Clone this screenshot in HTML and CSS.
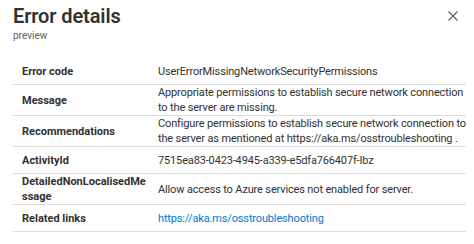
FILE: index.html
```html
<!DOCTYPE html>
<html>
<head>
<meta charset="utf-8">
<link rel="stylesheet" href="styles.css">
</head>
<body>
<div class="panel">
  <div class="header">
    <div class="titles">
      <h1 class="title">Error details</h1>
      <div class="subtitle">preview</div>
    </div>
    <button class="close" aria-label="Close">
      <svg width="10" height="10" viewBox="0 0 10 10"><path d="M0.5 0.5L9.5 9.5M9.5 0.5L0.5 9.5" stroke="#605e5c" stroke-width="1.1" fill="none"/></svg>
    </button>
  </div>
  <div class="table">
    <div class="row"><div class="label">Error code</div><div class="value">UserErrorMissingNetworkSecurityPermissions</div></div>
    <div class="row"><div class="label">Message</div><div class="value">Appropriate permissions to establish secure network connection<br>to the server are missing.</div></div>
    <div class="row"><div class="label">Recommendations</div><div class="value">Configure permissions to establish secure network connection to<br>the server as mentioned at https://aka.ms/osstroubleshooting .</div></div>
    <div class="row"><div class="label">ActivityId</div><div class="value">7515ea83-0423-4945-a339-e5dfa766407f-Ibz</div></div>
    <div class="row"><div class="label">DetailedNonLocalisedMe<br>ssage</div><div class="value">Allow access to Azure services not enabled for server.</div></div>
    <div class="row"><div class="label">Related links</div><div class="value"><a class="link" href="#">https://aka.ms/osstroubleshooting</a></div></div>
  </div>
</div>
</body>
</html>
```
FILE: styles.css
```css
html, body {
  margin: 0;
  padding: 0;
  background: #ffffff;
}
body {
  font-family: Roboto, "Liberation Sans", sans-serif;
  color: #323130;
  width: 474px;
  height: 244px;
  overflow: hidden;
}
.panel {
  padding: 4px 16px 0 13px;
}
.header {
  display: flex;
  justify-content: space-between;
  align-items: flex-start;
}
.title {
  margin: 0;
  font-size: 20px;
  font-weight: 600;
  line-height: 25px;
  letter-spacing: -0.1px;
  color: #323130;
}
.subtitle {
  font-size: 10px;
  line-height: 14px;
  color: #605e5c;
}
.close {
  border: none;
  background: none;
  padding: 0;
  margin: 7px 0 0 0;
  width: 10px;
  height: 10px;
  display: flex;
}
.table {
  margin-top: 15px;
  width: 453px;
}
.row {
  display: flex;
  align-items: center;
  min-height: 26px;
  border-bottom: 1px solid #dcdcdc;
}
.label {
  box-sizing: border-box;
  width: 145px;
  padding-left: 9px;
  flex: none;
  font-size: 11px;
  font-weight: 700;
  line-height: 15px;
  color: #323130;
}
.value {
  flex: 1;
  font-size: 11px;
  line-height: 15px;
  letter-spacing: -0.15px;
  white-space: nowrap;
  color: #323130;
}
.link {
  color: #0078d4;
  text-decoration: none;
}
```
